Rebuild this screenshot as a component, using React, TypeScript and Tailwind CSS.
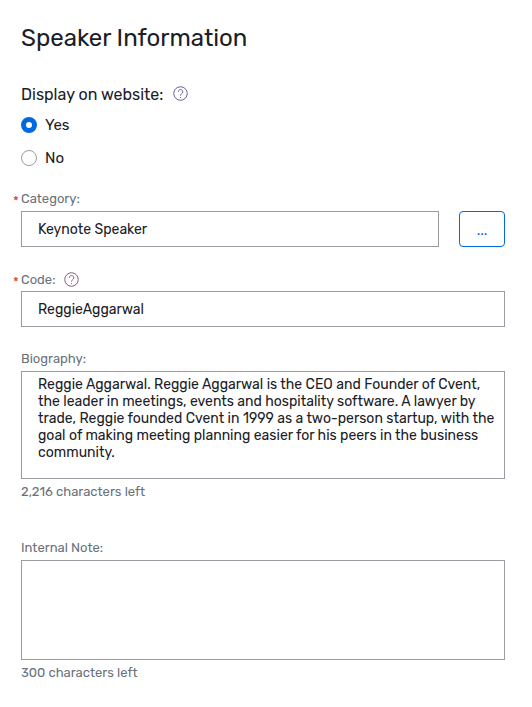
const font = { fontFamily: '"Rubik", Inter, "Liberation Sans", sans-serif' };

function Help({ color = 'text-[#5c5590]' }: { color?: string }) {
  return (
    <svg viewBox="0 0 16 16" className={`w-[15px] h-[15px] ${color}`} fill="none" stroke="currentColor">
      <circle cx="8" cy="8" r="7.2" strokeWidth="1" />
      <path d="M5.6 6.2a2.4 2.4 0 1 1 3.6 2.1c-.8.5-1.2.9-1.2 1.9" strokeWidth="1" />
      <circle cx="8" cy="12.2" r="0.6" fill="currentColor" stroke="none" />
    </svg>
  );
}

function Label({ text, required, help }: { text: string; required?: boolean; help?: boolean }) {
  return (
    <div className="relative flex items-center gap-[9px] h-4 text-[13px] text-[#69717a]">
      {required && <span className="absolute left-[-8px] top-0 text-[#d9472b]">*</span>}
      <span>{text}</span>
      {help && <span className="-mt-[2px]"><Help color="text-[#7d5570]" /></span>}
    </div>
  );
}

function Radio({ checked, label }: { checked?: boolean; label: string }) {
  return (
    <label className="flex items-center gap-2 h-[18px] text-[15px] text-[#1a2026]">
      <span className={checked ? 'w-4 h-4 rounded-full border-[5px] border-[#006ae1] bg-white' : 'w-4 h-4 rounded-full border border-[#9a9ca3] bg-white'} />
      {label}
    </label>
  );
}

export default function App() {
  return (
    <div className="w-[532px] h-[707px] bg-white pl-[21px] pr-[27px] pt-[23px] text-[#1a2026]" style={font}>
      <h1 className="text-2xl leading-[30px]">Speaker Information</h1>

      <div className="flex items-center gap-[10px] mt-[29px] h-6 text-base">
        <span className="pt-px">Display on website:</span>
        <span className="-mt-[2px]"><Help /></span>
      </div>
      <div className="flex flex-col gap-[15px] mt-[10px]">
        <Radio checked label="Yes" />
        <Radio label="No" />
      </div>

      <div className="mt-[24px]">
        <Label text="Category:" required />
        <div className="flex gap-5 mt-[4px]">
          <div className="flex-1 h-9 border border-[#9a9ca3] flex items-center px-4 pt-px text-sm">Keynote Speaker</div>
          <button className="w-[46px] h-9 border border-[#006ae1] rounded text-[#006ae1] text-sm pt-[3px]">...</button>
        </div>
      </div>

      <div className="mt-[25px]">
        <Label text="Code:" required help />
        <div className="h-9 mt-[3px] border border-[#9a9ca3] flex items-center px-4 pt-px text-sm">ReggieAggarwal</div>
      </div>

      <div className="mt-6">
        <Label text="Biography:" />
        <div className="h-[108px] mt-[4px] border border-[#9a9ca3] pl-4 pr-2 pt-[4px] text-sm leading-[17px]">
          Reggie Aggarwal. Reggie Aggarwal is the CEO and Founder of Cvent, the leader in meetings, events and hospitality software. A lawyer by trade, Reggie founded Cvent in 1999 as a two-person startup, with the goal of making meeting planning easier for his peers in the business community.
        </div>
        <div className="mt-[5px] text-[13px] leading-4 text-[#69717a]">2,216 characters left</div>
      </div>

      <div className="mt-[40px]">
        <Label text="Internal Note:" />
        <div className="h-[100px] mt-[4px] border border-[#9a9ca3]" />
        <div className="mt-[5px] text-[13px] leading-4 text-[#69717a]">300 characters left</div>
      </div>
    </div>
  );
}
